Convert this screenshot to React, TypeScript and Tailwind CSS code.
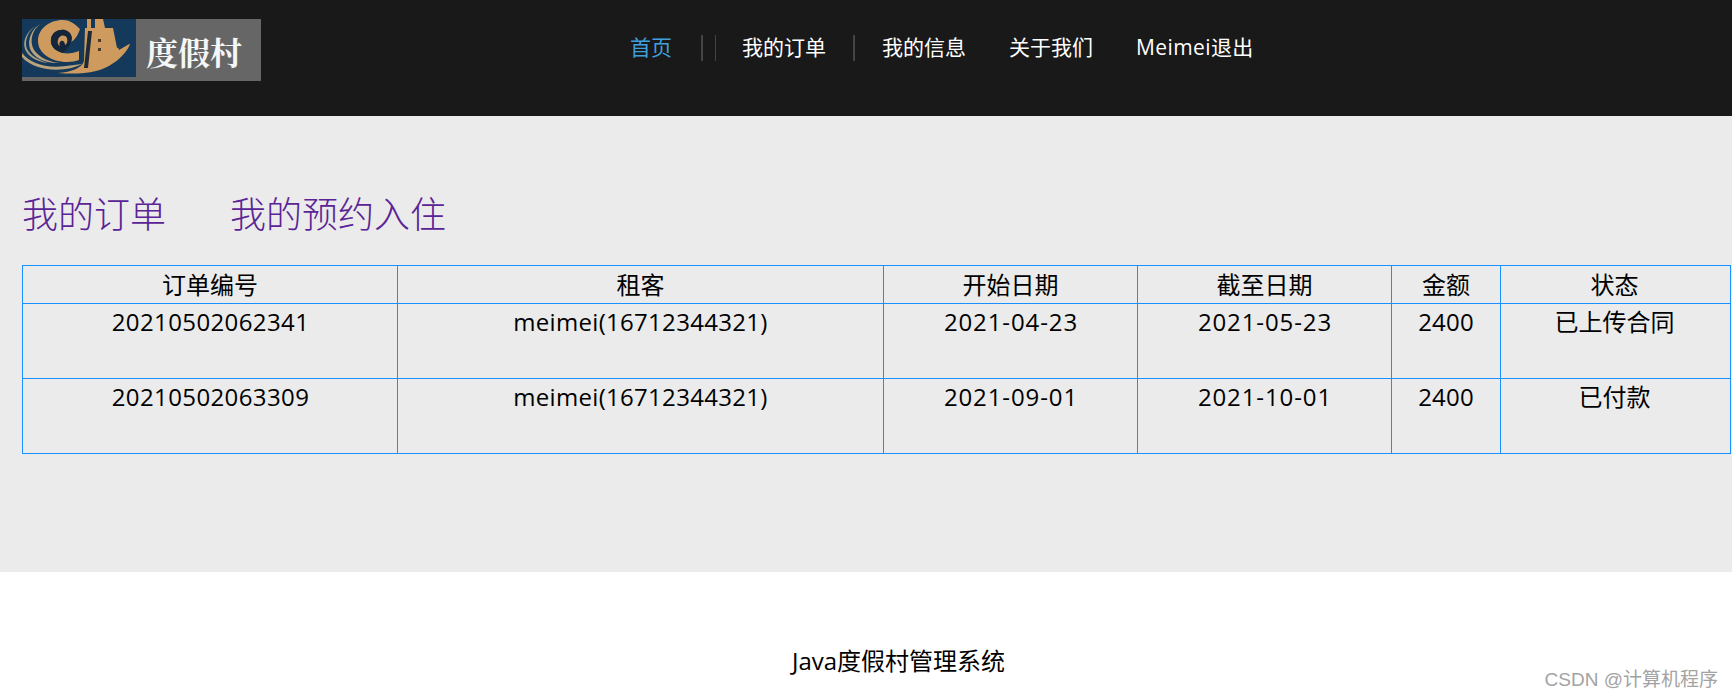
const font = "font-['Open_Sans','Noto_Sans_CJK_SC',sans-serif]";

function Logo() {
  return (
    <div className="flex h-[62px] w-[239px] bg-[#666666]">
      <svg width="114" height="58" viewBox="0 0 114 58" className="block shrink-0">
        <rect width="114" height="58" fill="#15395a" />
        <path d="M14 7 C6 12 2 22 5 30 C9 37 16 41 26 44 C16 43 6 38 3 30 C0 21 6 11 14 7 Z" fill="#a9a084" />
        <path d="M0 34 C8 44 24 50 44 47 L60 45 C46 53 14 54 0 38 Z" fill="#b9a27c" />
        <path d="M20 4 C10 10 7 22 12 31 C17 38 26 43 38 44 C24 45 12 39 8 30 C5 20 10 9 20 4 Z" fill="#b9a27c" />
        <path d="M41 1 C27 1 16 10 16 22 C16 34 29 43 45 43 C50 43 54 42 57 41 L57 32 C52 34 46 35 41 34 C32 32 28 26 29 20 C30 13 37 10 43 11 C49 13 51 18 49 23 C53 21 56 16 58 10 C52 4 47 1 41 1 Z" fill="#cf9a5e" />
        <path d="M29 20 C30 13 37 10 43 11 C49 13 51 18 49 23 C47 29 41 34 41 34 C32 32 28 26 29 20 Z" fill="#16263a" />
        <path d="M36 21 C37 16 43 15 45 19 C46 22 45 25 43 26 C43 23 41 21 39 22 C37 23 37 25 38 27 C36 26 35 23 36 21 Z" fill="#cf9a5e" />
        <path d="M65 0 L69 0 L69 9 L65 9 Z" fill="#cf9a5e" />
        <path d="M73 0 L81 0 L83 9 L73 9 Z" fill="#cf9a5e" />
        <path d="M63 9 L91 9 L95 29 L106 24 L108 25 C104 36 90 48 74 52 C62 55 48 55 36 54 C50 53 60 49 62 42 Z" fill="#cf9a5e" />
        <path d="M66 12 L70 12 L66 49 L62 49 Z" fill="#1e2a36" />
        <rect x="76" y="20" width="3" height="3" fill="#4a3a28" />
        <rect x="76" y="29" width="3" height="3" fill="#4a3a28" />
        <path d="M96 28 L108 22 L109 24 L97 31 Z" fill="#15395a" />
      </svg>
      <span className="ml-[10px] mt-[16px] text-[32px] leading-[32px] font-bold text-[#f4f6f8] font-['Noto_Serif_CJK_SC','Noto_Sans_CJK_SC',serif]">度假村</span>
    </div>
  );
}

const border = "border border-[#1890ff] text-[24px] font-normal text-black text-center align-top p-0";
const th = `${border} leading-[37px]`;
const td = `${border} leading-[36px]`;
const spacing = ["tracking-[0.4px] pl-[1px]", "tracking-[0.3px]", "tracking-[0.9px] pl-[1px]", "tracking-[0.9px] pl-[1px]", "tracking-[0.2px]", "pr-[2px]"];

const rows = [
  ["20210502062341", "meimei(16712344321)", "2021-04-23", "2021-05-23", "2400", "已上传合同"],
  ["20210502063309", "meimei(16712344321)", "2021-09-01", "2021-10-01", "2400", "已付款"],
];

export default function App() {
  return (
    <div className={`relative w-[1732px] h-[698px] overflow-hidden bg-white ${font}`}>
      <header className="flex h-[116px] bg-[#191919] pl-[22px] pt-[19px]">
        <Logo />
        <nav className="ml-[369px] mt-[16px] flex h-[26px] text-[21px] leading-[24px] text-white">
          <a className="text-[#3fa0de] pr-[29px] border-r-2 border-[#444444]">首页</a>
          <span className="w-[13px] border-r border-[#444444]" />
          <a className="pl-[26px] pr-[27px] border-r-2 border-[#444444]">我的订单</a>
          <a className="pl-[27px]">我的信息</a>
          <a className="ml-[43px]">关于我们</a>
          <a className="ml-[43px] tracking-[0.4px]">Meimei退出</a>
        </nav>
      </header>
      <main className="h-[456px] bg-[#ebebeb] pl-[22px] pt-[74px]">
        <div className="flex gap-[64px] text-[36px] font-light leading-[50px] text-[#5a2496]">
          <a>我的订单</a>
          <a>我的预约入住</a>
        </div>
        <table className="mt-[25px] w-[1708px] table-fixed border-collapse">
          <thead>
            <tr className="h-[38px]">
              <th className={`${th} w-[375px]`}>订单编号</th>
              <th className={`${th} w-[486px]`}>租客</th>
              <th className={`${th} w-[254px]`}>开始日期</th>
              <th className={`${th} w-[254px]`}>截至日期</th>
              <th className={`${th} w-[109px]`}>金额</th>
              <th className={`${th} w-[230px] pr-[2px]`}>状态</th>
            </tr>
          </thead>
          <tbody>
            {rows.map((r) => (
              <tr key={r[0]} className="h-[75px]">
                {r.map((c, i) => (
                  <td key={i} className={`${td} ${spacing[i]}`}>{c}</td>
                ))}
              </tr>
            ))}
          </tbody>
        </table>
      </main>
      <footer className="pt-[73px] pl-[65px] text-center text-[24px] leading-[32px] text-black">Java度假村管理系统</footer>
      <div className="absolute right-[14px] top-[668px] text-[19px] leading-[24px] text-[#a3a3a3] font-['Liberation_Sans','Noto_Sans_CJK_SC',sans-serif]">CSDN @计算机程序</div>
    </div>
  );
}
